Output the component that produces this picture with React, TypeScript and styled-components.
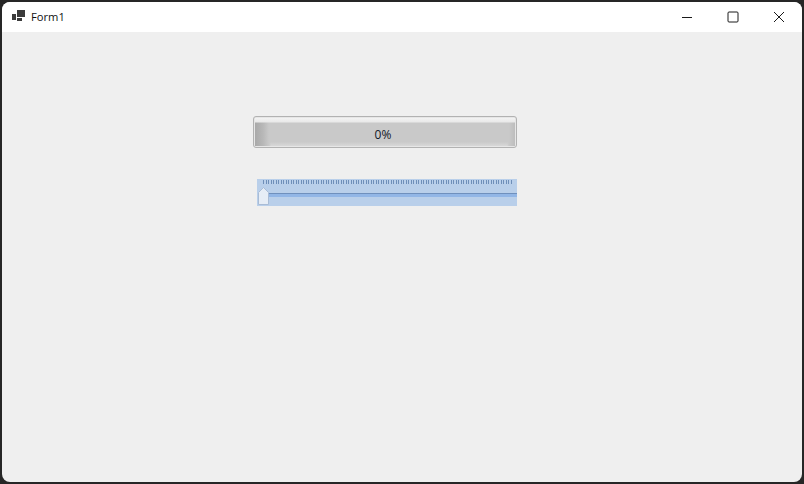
import styled, { createGlobalStyle } from 'styled-components';

const GlobalStyle = createGlobalStyle`
  html, body {
    margin: 0;
    padding: 0;
    background-color: #262626;
  }
`;

const Desktop = styled.div`
  width: 804px;
  height: 484px;
  padding: 2px 2px 2px 2px;
  box-sizing: border-box;
  background-color: #262626;
`;

const Window = styled.div`
  height: 100%;
  display: flex;
  flex-direction: column;
  border-radius: 8px;
  overflow: hidden;
  background-color: #efefef;
`;

const TitleBar = styled.div`
  height: 30px;
  flex: none;
  display: flex;
  align-items: center;
  background-color: #ffffff;
  padding-left: 10px;
`;

const AppIcon = styled.svg`
  width: 13px;
  height: 12px;
  margin-right: 6px;
  margin-top: -2px;
`;

const Title = styled.span`
  font-family: 'Open Sans', 'Liberation Sans', sans-serif;
  font-size: 11.2px;
  color: #111111;
  flex-grow: 1;
  margin-top: -2px;
`;

const CaptionButton = styled.div`
  width: 46px;
  height: 30px;
  display: grid;
  place-items: center;

  svg {
    width: 12px;
    height: 12px;
  }
`;

const Client = styled.div`
  flex-grow: 1;
  padding: 84px 0 0 251px;
`;

const ProgressFrame = styled.div`
  width: 264px;
  height: 32px;
  box-sizing: border-box;
  border: 1px solid #b2b2b2;
  border-radius: 3px;
  background-color: #e6e6e6;
  padding: 1px;
  margin-bottom: 31px;
`;

const ProgressTrough = styled.div`
  height: 100%;
  display: flex;
  align-items: center;
  justify-content: center;
  padding: 5px 4px 0 0;
  box-sizing: border-box;
  background:
    linear-gradient(to bottom, #f3f3f3 0, #e9e9e9 4px, transparent 5px),
    linear-gradient(to right, #a9a9a9 0, #b8b8b8 8px, #c9c9c9 14px, transparent 16px),
    linear-gradient(to left, #bdbdbd 0, #c9c9c9 6px, transparent 8px),
    linear-gradient(to bottom, #c9c9c9 0, #c9c9c9 85%, #d8d8d8 100%);
  font-family: 'Open Sans', 'Liberation Sans', sans-serif;
  font-size: 12px;
  color: #111827;
`;

const Track = styled.div`
  position: relative;
  width: 260px;
  height: 27px;
  margin-left: 4px;
  background-color: #b9cfea;
`;

const Ticks = styled.svg`
  position: absolute;
  left: 6px;
  top: 1px;
  width: 250px;
  height: 4px;
`;

const Groove = styled.div`
  position: absolute;
  left: 4px;
  right: 0;
  top: 14px;
  height: 4px;
  box-sizing: border-box;
  border-top: 1px solid #6f90bd;
  background-color: #92b6e6;
`;

const Thumb = styled.svg`
  position: absolute;
  left: 1px;
  top: 8px;
  width: 11px;
  height: 18px;
`;

const tickPositions = Array.from({ length: 100 }, (_, i) => Math.round(i * 2.5));

export default function App() {
  return (
    <Desktop>
      <GlobalStyle />
      <Window>
        <TitleBar>
          <AppIcon viewBox="0 0 13 12">
            <rect x="0" y="4" width="4" height="6" fill="#3b3b3b" />
            <rect x="5" y="0" width="8" height="7" fill="#3b3b3b" />
            <rect x="5" y="8" width="5" height="3" fill="#3b3b3b" />
          </AppIcon>
          <Title>Form1</Title>
          <CaptionButton>
            <svg viewBox="0 0 12 12">
              <path d="M1 6.5H11" stroke="#1a1a1a" fill="none" />
            </svg>
          </CaptionButton>
          <CaptionButton>
            <svg viewBox="0 0 12 12">
              <rect x="1" y="1" width="10" height="10" rx="1" stroke="#1a1a1a" fill="none" />
            </svg>
          </CaptionButton>
          <CaptionButton>
            <svg viewBox="0 0 12 12">
              <path d="M1 1L11 11M11 1L1 11" stroke="#1a1a1a" fill="none" />
            </svg>
          </CaptionButton>
        </TitleBar>
        <Client>
          <ProgressFrame>
            <ProgressTrough>0%</ProgressTrough>
          </ProgressFrame>
          <Track>
            <Ticks viewBox="0 0 250 4" shapeRendering="crispEdges">
              {tickPositions.map((x) => (
                <rect key={x} x={x} y="0" width="1" height="4" fill="#6f8fb9" />
              ))}
            </Ticks>
            <Groove />
            <Thumb viewBox="0 0 11 18">
              <path d="M0.5 5.5L5.5 0.5L10.5 5.5V17.5H0.5Z" fill="#e6edf6" stroke="#a9bcd6" />
            </Thumb>
          </Track>
        </Client>
      </Window>
    </Desktop>
  );
}
